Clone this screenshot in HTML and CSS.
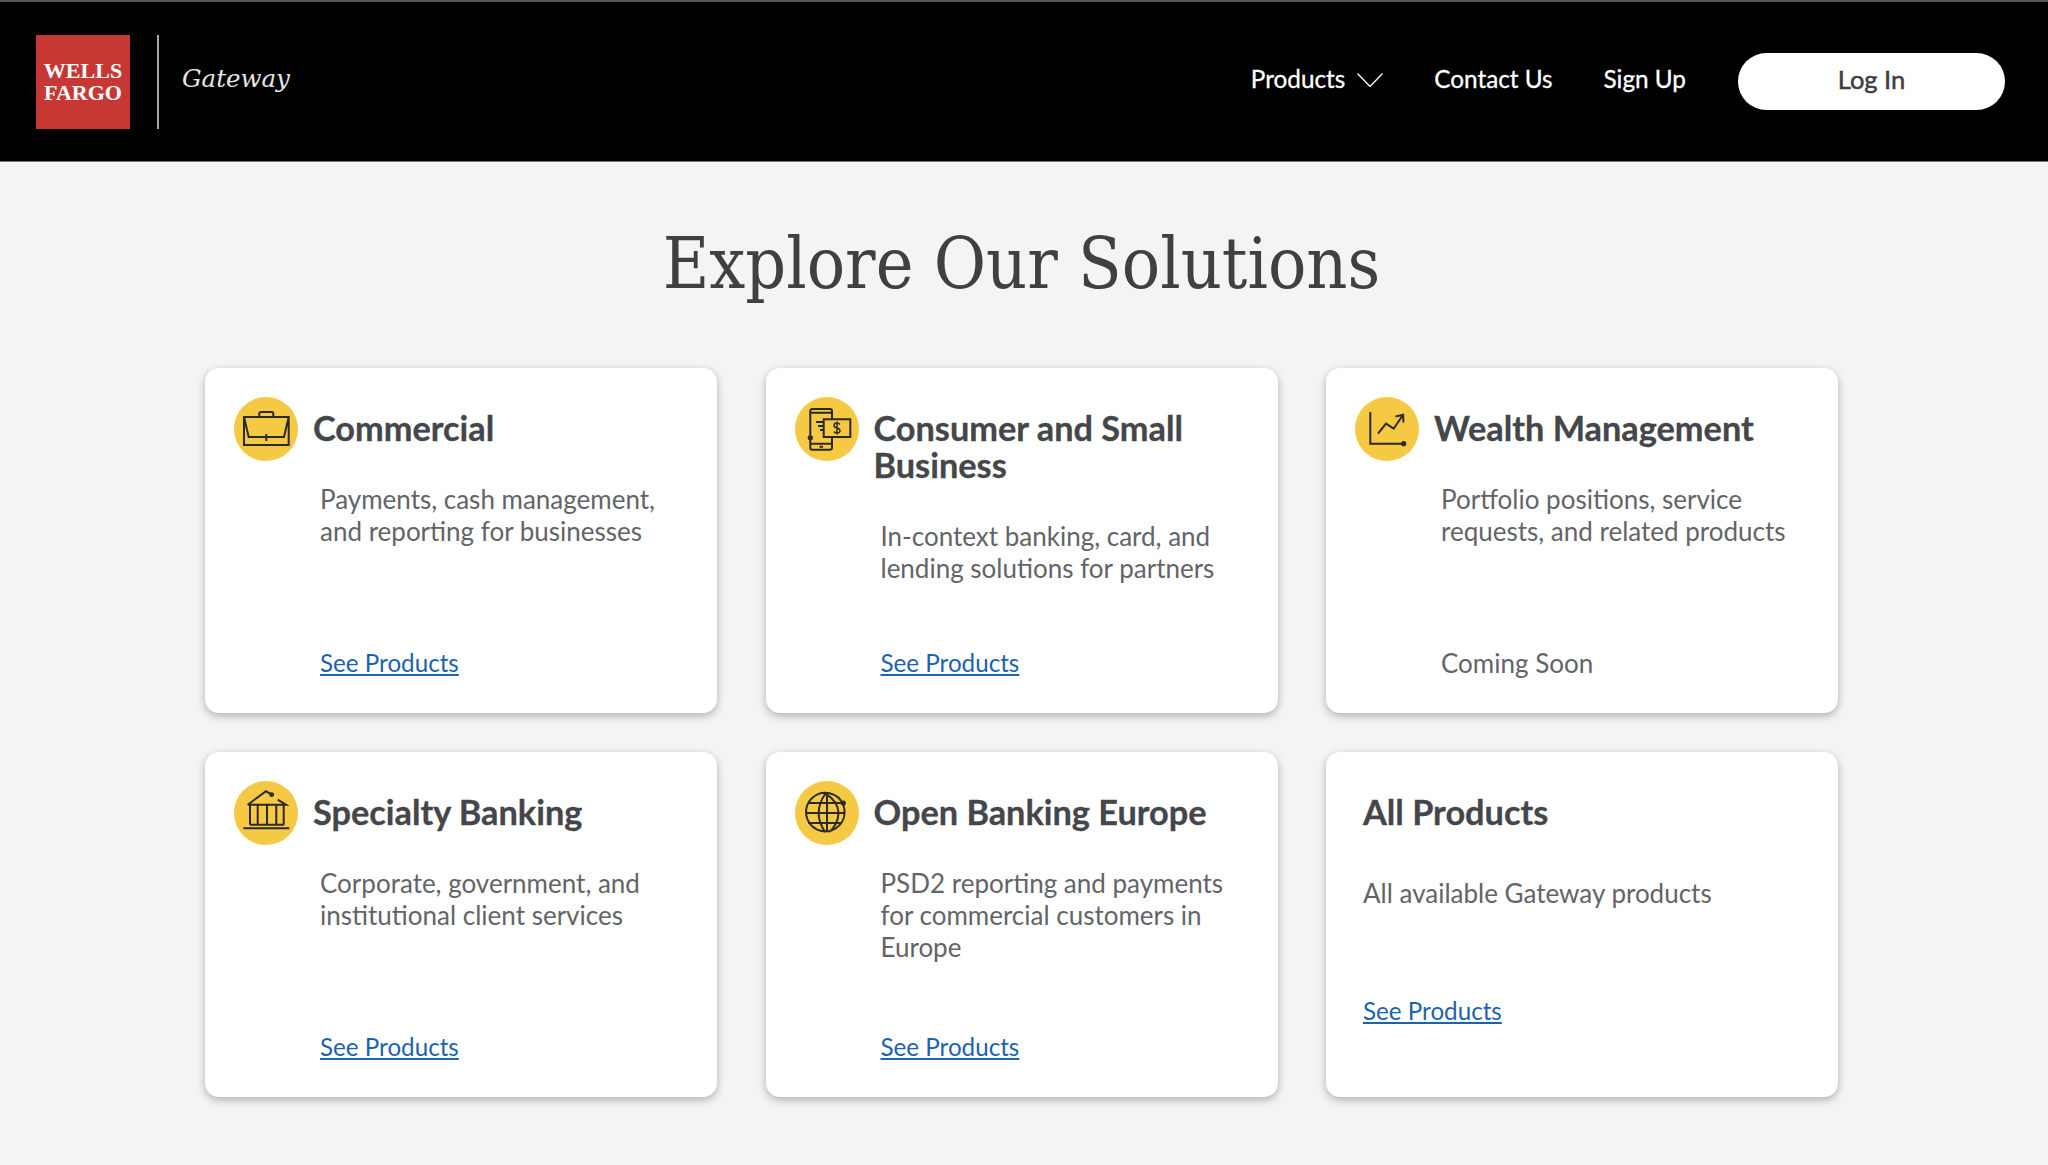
FILE: index.html
```html
<!DOCTYPE html>
<html>
<head>
    <title>Wells Fargo Gateway</title>
    <link rel="stylesheet" href="styles.css">
</head>
<body>

<header class="site-header">
    <div class="logo-box">WELLS<br>FARGO</div>
    <div class="logo-divider"></div>
    <div class="logo-name">Gateway</div>
    <nav class="main-nav">
        <a href="#" class="nav-products">Products
            <svg class="chevron" viewBox="0 0 26 14"><path d="M0.5 0.5 13 13.5 25.5 0.5"/></svg>
        </a>
        <a href="#">Contact Us</a>
        <a href="#">Sign Up</a>
        <a href="#" class="login-btn">Log In</a>
    </nav>
</header>

<main class="content">
    <h1>Explore Our Solutions</h1>

    <div class="card-grid">
        <section class="card">
            <div class="card-head">
                <svg class="card-icon" viewBox="0 0 64 64">
                    <circle class="disc" cx="32" cy="32" r="32"/>
                    <path d="M10 20H54.7V48H10ZM25.3 20V16.5Q25.3 15 27 15H37.6Q39.3 15 39.3 16.5V20M10 20 14.7 40H50L54.7 20M32.3 37V44"/>
                </svg>
                <h2>Commercial</h2>
            </div>
            <p class="card-text">Payments, cash management, and reporting for businesses</p>
            <a href="#" class="card-link">See Products</a>
        </section>

        <section class="card">
            <div class="card-head">
                <svg class="card-icon" viewBox="0 0 64 64">
                    <circle class="disc" cx="32" cy="32" r="32"/>
                    <path d="M15.3 38V14Q15.3 12 17.3 12H35Q37 12 37 14V22.3M37 40V50.7Q37 52.7 35 52.7H17.3Q15.3 52.7 15.3 50.7V43M15.3 15.7H37M15.3 46.7H37M24.5 49.7H28M28.7 22.3H55.3V40H28.7ZM21 25H28.7M23 29H28.7M25 33H28.7"/>
                    <path class="thin" d="M45 27.5Q44 26 42 26 39 26 39 28.3 39 30.3 42 31 45 31.7 45 33.7 45 36 42 36 40 36 39 34.5M42 24.5V37.5"/>
                    <circle class="dot" cx="15.3" cy="40.7" r="2.6"/>
                </svg>
                <h2>Consumer and Small Business</h2>
            </div>
            <p class="card-text">In-context banking, card, and lending solutions for partners</p>
            <a href="#" class="card-link">See Products</a>
        </section>

        <section class="card">
            <div class="card-head">
                <svg class="card-icon" viewBox="0 0 64 64">
                    <circle class="disc" cx="32" cy="32" r="32"/>
                    <path d="M15.3 15V46.7H48.7M23 36.7 31 26.7 38.7 31.7 47.7 18.3M40.5 19.5 48.2 17.8 48.4 25.5"/>
                    <circle class="dot" cx="48.7" cy="46.7" r="2.6"/>
                </svg>
                <h2>Wealth Management</h2>
            </div>
            <p class="card-text">Portfolio positions, service requests, and related products</p>
            <span class="card-soon">Coming Soon</span>
        </section>

        <section class="card">
            <div class="card-head">
                <svg class="card-icon" viewBox="0 0 64 64">
                    <circle class="disc" cx="32" cy="32" r="32"/>
                    <path d="M13.7 23.7 32 10.3 37.7 13.7M43.7 18.7 52 23.7H13.7M16 24V43.7M23.7 24V43.7M33 24V43.7M42.3 24V43.7M49.7 24V43.7M16 43.7H50M9.3 47.3H55.3"/>
                    <circle class="dot" cx="37.7" cy="13.7" r="2.4"/>
                </svg>
                <h2>Specialty Banking</h2>
            </div>
            <p class="card-text">Corporate, government, and institutional client services</p>
            <a href="#" class="card-link">See Products</a>
        </section>

        <section class="card">
            <div class="card-head">
                <svg class="card-icon" viewBox="0 0 64 64">
                    <circle class="disc" cx="32" cy="32" r="32"/>
                    <path d="M48.3 24A19.3 19.3 0 1 0 49.6 32 19.3 19.3 0 0 0 48.3 24M30.3 12.7Q17 32 30.3 51.3M30.3 12.7Q43 20 43.5 32 43 44 34 51M32 12.7V51.3M13 22H46M11 32H49.6M13 42H47"/>
                    <circle class="dot" cx="48.3" cy="22" r="2.6"/>
                </svg>
                <h2>Open Banking Europe</h2>
            </div>
            <p class="card-text">PSD2 reporting and payments for commercial customers in Europe</p>
            <a href="#" class="card-link">See Products</a>
        </section>

        <section class="card card-plain">
            <div class="card-head">
                <h2>All Products</h2>
            </div>
            <p class="card-text">All available Gateway products</p>
            <a href="#" class="card-link">See Products</a>
        </section>
    </div>
</main>

</body>
</html>
```

FILE: styles.css
```css
body {
    margin: 0;
    background-color: #f3f4f6;
    font-family: Lato, 'Noto Sans', sans-serif;
    color: #636468;
}

.site-header {
    display: flex;
    align-items: center;
    box-sizing: border-box;
    height: 162px;
    background-color: #000;
    border-top: 2px solid #55555a;
    border-bottom: 1px solid #77777a;
    padding: 0 43px 0 36px;
}

.logo-box {
    width: 94px;
    height: 94px;
    display: flex;
    align-items: center;
    justify-content: center;
    text-align: center;
    background-color: #c73834;
    color: #fff;
    font-family: 'Liberation Serif', serif;
    font-weight: bold;
    font-size: 22px;
    line-height: 22px;
}

.logo-divider {
    width: 2px;
    height: 94px;
    margin: 0 23px 0 27px;
    background-color: #a8a8a8;
}

.logo-name {
    margin-bottom: 6px;
    font-family: 'DejaVu Serif', serif;
    font-style: italic;
    font-size: 24.5px;
    color: #e6e6e6;
}

.main-nav {
    display: flex;
    align-items: center;
    gap: 51px;
    margin-left: auto;
}

.main-nav a {
    padding-bottom: 6px;
    color: #fff;
    font-size: 24.3px;
    text-decoration: none;
    -webkit-text-stroke: 0.3px currentColor;
}

.nav-products {
    display: flex;
    align-items: center;
    gap: 12px;
}

.chevron {
    width: 26px;
    height: 14px;
    margin-top: 2px;
    fill: none;
    stroke: #fff;
    stroke-width: 1.3;
}

.main-nav .login-btn {
    box-sizing: border-box;
    width: 267px;
    height: 57px;
    margin-left: 1px;
    display: flex;
    align-items: center;
    justify-content: center;
    border-radius: 29px;
    background-color: #fff;
    color: #3e3e42;
    font-size: 25.5px;
    -webkit-text-stroke: 0.5px currentColor;
}

.content {
    width: 1633px;
    margin-left: 205px;
    padding-bottom: 68px;
}

h1 {
    margin: 54px 0 56px;
    text-align: center;
    font-family: 'DejaVu Serif', serif;
    font-stretch: condensed;
    font-weight: normal;
    font-size: 71px;
    line-height: 96px;
    color: #404040;
}

.card-grid {
    display: grid;
    grid-template-columns: repeat(3, 512px);
    grid-auto-rows: 345px;
    column-gap: 48.5px;
    row-gap: 39px;
}

.card {
    display: flex;
    flex-direction: column;
    box-sizing: border-box;
    padding: 29px 29px 34px;
    background-color: #fff;
    border-radius: 14px;
    box-shadow: 0 3px 8px rgba(0, 0, 0, 0.28);
}

.card-head {
    display: flex;
    align-items: flex-start;
    gap: 15px;
}

.card-icon {
    flex: none;
    width: 64px;
    height: 64px;
    fill: none;
    stroke: #2b2a22;
    stroke-width: 2;
}

.card-icon .disc {
    fill: #f6c944;
    stroke: none;
}

.card-icon .dot {
    fill: #2b2a22;
    stroke: none;
}

.card-icon .thin {
    stroke-width: 1.5;
}

h2 {
    margin: 12px 0 15px;
    font-size: 34.3px;
    line-height: 37px;
    font-weight: bold;
    color: #44464a;
    -webkit-text-stroke: 0.3px currentColor;
}

.card-text {
    margin: 22px 20px 0 86px;
    font-size: 26px;
    line-height: 32px;
}

.card-link, .card-soon {
    margin: auto 0 0 86px;
    font-size: 26px;
    line-height: 32px;
}

.card-link {
    color: #1c63ab;
    font-size: 24.2px;
}

.card-plain {
    padding: 29px 30px 70px 37px;
}

.card-plain .card-text {
    margin: 32px 0 0;
}

.card-plain .card-link {
    margin-left: 0;
}
```
